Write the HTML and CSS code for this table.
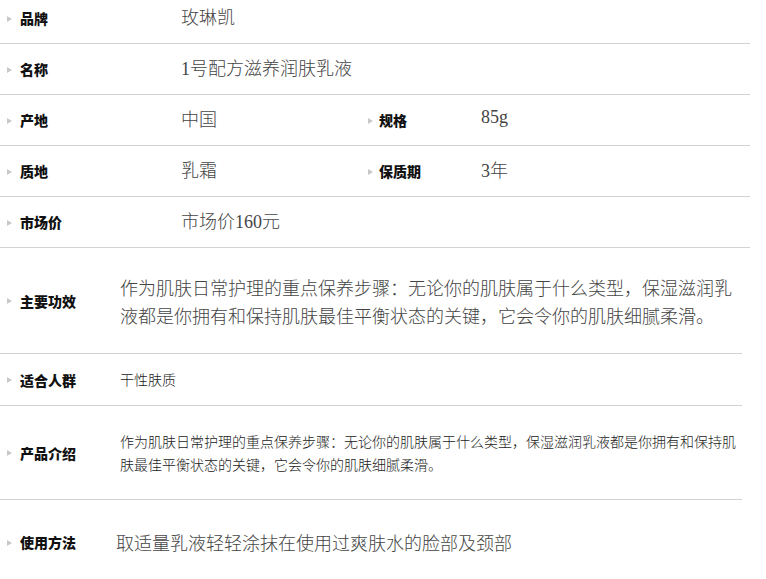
FILE: index.html
```html
<!DOCTYPE html>
<html lang="zh-CN">
<head>
    <meta charset="UTF-8">
    <title>产品参数</title>
    <link rel="stylesheet" href="styles.css">
</head>
<body>
    <div class="specs">
        <div class="row">
            <div class="label"><span class="arrow"></span>品牌</div>
            <div class="value">玫琳凯</div>
        </div>
        <div class="row">
            <div class="label"><span class="arrow"></span>名称</div>
            <div class="value wide">1号配方滋养润肤乳液</div>
        </div>
        <div class="row">
            <div class="label"><span class="arrow"></span>产地</div>
            <div class="value">中国</div>
            <div class="label side"><span class="arrow"></span>规格</div>
            <div class="value">85g</div>
        </div>
        <div class="row">
            <div class="label"><span class="arrow"></span>质地</div>
            <div class="value">乳霜</div>
            <div class="label side"><span class="arrow"></span>保质期</div>
            <div class="value">3年</div>
        </div>
        <div class="row">
            <div class="label"><span class="arrow"></span>市场价</div>
            <div class="value wide">市场价160元</div>
        </div>
    </div>

    <div class="details">
        <div class="row effect">
            <div class="label"><span class="arrow"></span>主要功效</div>
            <div class="text-lg">作为肌肤日常护理的重点保养步骤：无论你的肌肤属于什么类型，保湿滋润乳液都是你拥有和保持肌肤最佳平衡状态的关键，它会令你的肌肤细腻柔滑。</div>
        </div>
        <div class="row crowd">
            <div class="label"><span class="arrow"></span>适合人群</div>
            <div class="text-sm">干性肤质</div>
        </div>
        <div class="row intro">
            <div class="label"><span class="arrow"></span>产品介绍</div>
            <div class="text-sm">作为肌肤日常护理的重点保养步骤：无论你的肌肤属于什么类型，保湿滋润乳液都是你拥有和保持肌肤最佳平衡状态的关键，它会令你的肌肤细腻柔滑。</div>
        </div>
        <div class="row usage">
            <div class="label"><span class="arrow"></span>使用方法</div>
            <div class="text-lg">取适量乳液轻轻涂抹在使用过爽肤水的脸部及颈部</div>
        </div>
    </div>
</body>
</html>
```

FILE: styles.css
```css
body {
    margin: 0;
    background: #fff;
    font-family: "Noto Sans CJK SC", sans-serif;
    color: #333;
}
.row {
    display: flex;
    align-items: center;
    border-bottom: 1px solid #d2d2d2;
}
.label {
    display: flex;
    align-items: center;
    font-size: 14px;
    font-weight: 900;
    color: #111;
}
.arrow {
    margin: 1px 8px 0 7px;
    border-left: 5px solid #c8c8c8;
    border-top: 3px solid transparent;
    border-bottom: 3px solid transparent;
}

/* top block: short key / value pairs */
.specs {
    width: 750px;
    margin-top: -7px;
}
.specs .row {
    height: 50px;
}
.specs .label {
    width: 181px;
}
.specs .label.side {
    width: 113px;
}
.specs .label.side .arrow {
    margin-left: 0;
    margin-right: 6px;
}
.value {
    width: 187px;
    padding-bottom: 5px;
    font-family: "Liberation Serif", "Noto Sans CJK SC", serif;
    font-size: 18px;
    font-weight: 300;
    color: #444;
}
.value.wide {
    width: auto;
}

/* bottom block: long descriptions */
.details {
    width: 742px;
}
.details .label {
    width: 120px;
    flex-shrink: 0;
}
.text-lg {
    width: 620px;
    font-size: 18px;
    line-height: 28px;
    font-weight: 300;
    color: #444;
}
.text-sm {
    width: 620px;
    font-size: 14px;
    line-height: 23px;
    font-weight: 300;
    color: #222;
}
.effect {
    height: 105px;
}
.crowd {
    height: 51px;
}
.intro {
    height: 93px;
}
.usage {
    height: 84px;
    border-bottom: none;
}
.usage .label {
    width: 116px;
}
```
